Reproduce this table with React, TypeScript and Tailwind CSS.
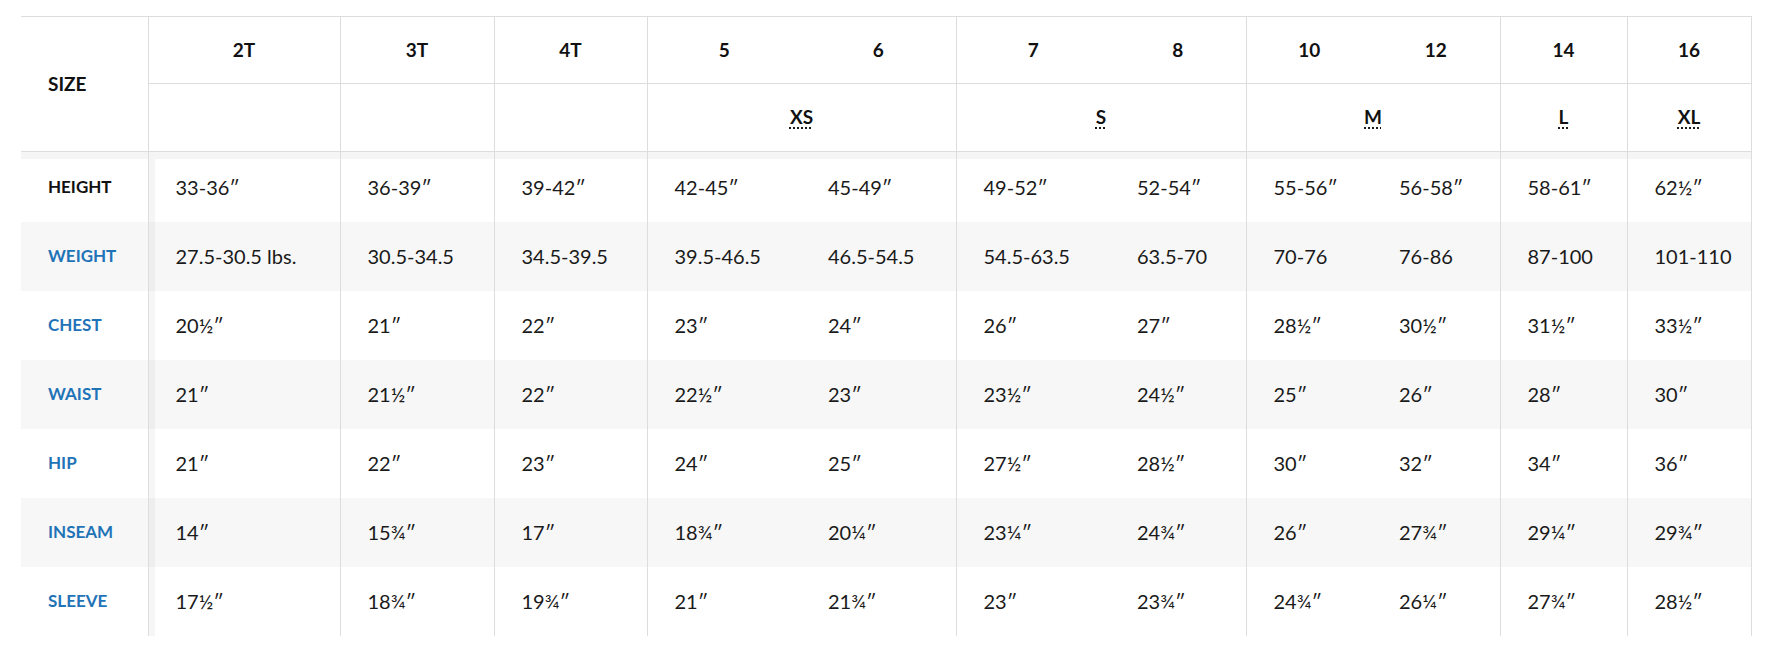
import React from "react";

type Row = { label: string; link: boolean; values: string[] };

const rows: Row[] = [
  { label: "HEIGHT", link: false, values: ["33-36″", "36-39″", "39-42″", "42-45″", "45-49″", "49-52″", "52-54″", "55-56″", "56-58″", "58-61″", "62½″"] },
  { label: "WEIGHT", link: true, values: ["27.5-30.5 lbs.", "30.5-34.5", "34.5-39.5", "39.5-46.5", "46.5-54.5", "54.5-63.5", "63.5-70", "70-76", "76-86", "87-100", "101-110"] },
  { label: "CHEST", link: true, values: ["20½″", "21″", "22″", "23″", "24″", "26″", "27″", "28½″", "30½″", "31½″", "33½″"] },
  { label: "WAIST", link: true, values: ["21″", "21½″", "22″", "22½″", "23″", "23½″", "24½″", "25″", "26″", "28″", "30″"] },
  { label: "HIP", link: true, values: ["21″", "22″", "23″", "24″", "25″", "27½″", "28½″", "30″", "32″", "34″", "36″"] },
  { label: "INSEAM", link: true, values: ["14″", "15¾″", "17″", "18¾″", "20¼″", "23¼″", "24¾″", "26″", "27¾″", "29¼″", "29¾″"] },
  { label: "SLEEVE", link: true, values: ["17½″", "18¾″", "19¾″", "21″", "21¾″", "23″", "23¾″", "24¾″", "26¼″", "27¾″", "28½″"] },
];

const sizes = ["2T", "3T", "4T", "5", "6", "7", "8", "10", "12", "14", "16"];
// columns that start a group get a left rule
const groupStart = [true, true, true, true, false, true, false, true, false, true, true];
const widths = ["w-[192px]", "w-[154px]", "w-[153px]", "w-[154px]", "w-[155px]", "w-[154px]", "w-[136px]", "w-[126px]", "w-[128px]", "w-[127px]", "w-[124px]"];

const line = "border-[#dddddd]";

export default function App() {
  return (
    <div className="bg-white min-h-[657px] pt-[16px] px-[21px] font-['Lato','Open_Sans',sans-serif] text-[#1a1a1a]">
      <table className={`table-fixed w-[1730px] border-collapse border-r ${line}`}>
        <colgroup>
          <col className="w-[127px]" />
          {widths.map((w, i) => (
            <col key={i} className={w} />
          ))}
        </colgroup>
        <thead>
          <tr className="h-[67px]">
            <th rowSpan={2} className={`border-t border-b ${line} pl-[27px] text-left text-[19px] font-bold text-[#111]`}>
              SIZE
            </th>
            {sizes.map((s, i) => (
              <th
                key={s}
                className={`border-t border-b ${line} ${groupStart[i] ? "border-l" : ""} text-center text-[19px] font-bold text-[#111]`}
              >
                {s}
              </th>
            ))}
          </tr>
          <tr className="h-[68px]">
            <th className={`border-l border-b ${line}`}></th>
            <th className={`border-l border-b ${line}`}></th>
            <th className={`border-l border-b ${line}`}></th>
            <Abbr span={2} label="XS" title="Extra Small" />
            <Abbr span={2} label="S" title="Small" />
            <Abbr span={2} label="M" title="Medium" />
            <Abbr span={1} label="L" title="Large" />
            <Abbr span={1} label="XL" title="Extra Large" />
          </tr>
        </thead>
        <tbody>
          {rows.map((r, ri) => (
            <tr key={r.label} className={`${ri === 0 ? "h-[70px]" : "h-[69px]"} ${ri % 2 === 1 ? "bg-[#f7f7f7]" : ""}`}>
              <td
                className={`pl-[27px] text-[17px] font-bold ${r.link ? "text-[#1f73b7]" : "text-[#111]"} ${
                  ri === 0 ? "shadow-[inset_0_7px_0_rgba(0,0,0,0.04)]" : ""
                }`}
              >
                {r.label}
              </td>
              {r.values.map((v, i) => (
                <td
                  key={i}
                  className={`pl-[27px] text-[20px] whitespace-nowrap ${groupStart[i] ? `border-l ${line}` : ""} ${
                    i === 0
                      ? ri === 0
                        ? "shadow-[inset_6px_7px_0_rgba(0,0,0,0.04)]"
                        : "shadow-[inset_6px_0_0_rgba(0,0,0,0.035)]"
                      : ri === 0
                      ? "shadow-[inset_0_7px_0_rgba(0,0,0,0.04)]"
                      : ""
                  }`}
                >
                  {v}
                </td>
              ))}
            </tr>
          ))}
        </tbody>
      </table>
    </div>
  );
}

function Abbr({ span, label, title }: { span: number; label: string; title: string }) {
  return (
    <th colSpan={span} className={`border-l border-b ${line} text-center text-[19px] font-bold text-[#111]`}>
      <abbr title={title} className="underline decoration-dotted underline-offset-[3px]">
        {label}
      </abbr>
    </th>
  );
}
